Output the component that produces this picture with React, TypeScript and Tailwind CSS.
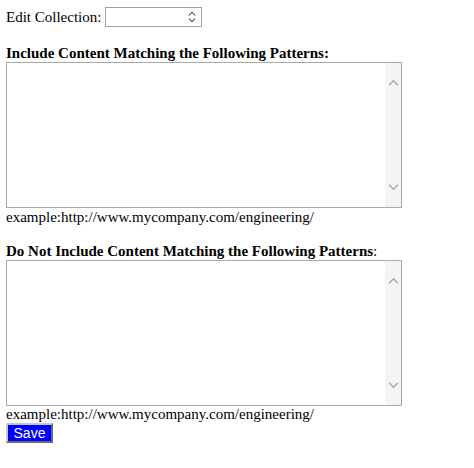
import React from "react";

function Chevron({ up, className }: { up?: boolean; className?: string }) {
  return (
    <svg viewBox="0 0 10 6" className={className} fill="none" stroke="currentColor" strokeWidth="1.3">
      {up ? <path d="M1 5.5 L5 1.5 L9 5.5" /> : <path d="M1 0.5 L5 4.5 L9 0.5" />}
    </svg>
  );
}

function PatternBox() {
  return (
    <div className="flex w-[396px] h-[146px] border border-[#a9a9a9] bg-white">
      <textarea className="flex-1 resize-none outline-none bg-white" />
      <div className="w-[16px] bg-[#f4f4f4] flex flex-col items-center justify-between py-[16px] text-[#a8a8a8]">
        <Chevron up className="w-[11px] h-[7px]" />
        <Chevron className="w-[11px] h-[7px]" />
      </div>
    </div>
  );
}

export default function App() {
  return (
    <div className="min-h-screen bg-white text-black font-['Liberation_Serif',serif] text-[15px] pl-[6px] pt-[7px]">
      <div className="flex items-center h-[20px]">
        <span>Edit Collection:</span>
        <div className="ml-[4px] flex w-[97px] h-[20px] border border-[#a0a0a0] bg-white">
          <input type="text" className="flex-1 min-w-0 outline-none" />
          <div className="w-[14px] flex flex-col items-center justify-center gap-[2px] text-[#505050] mr-[2px]">
            <Chevron up className="w-[8px] h-[5px]" />
            <Chevron className="w-[8px] h-[5px]" />
          </div>
        </div>
      </div>

      <div className="mt-[17px] font-bold leading-[18px]">Include Content Matching the Following Patterns:</div>
      <PatternBox />
      <div className="leading-[18px]">example:http://www.mycompany.com/engineering/</div>

      <div className="mt-[16px] font-bold leading-[18px]">
        Do Not Include Content Matching the Following Patterns<span className="font-normal">:</span>
      </div>
      <PatternBox />
      <div className="leading-[17px]">example:http://www.mycompany.com/engineering/</div>

      <button className="block w-[47px] h-[20px] bg-[#0000ff] text-white font-['Liberation_Sans',sans-serif] text-[14px] leading-none border-2 border-t-[#c8c8c8] border-l-[#c8c8c8] border-b-[#6a6a6a] border-r-[#6a6a6a]">
        Save
      </button>
    </div>
  );
}
